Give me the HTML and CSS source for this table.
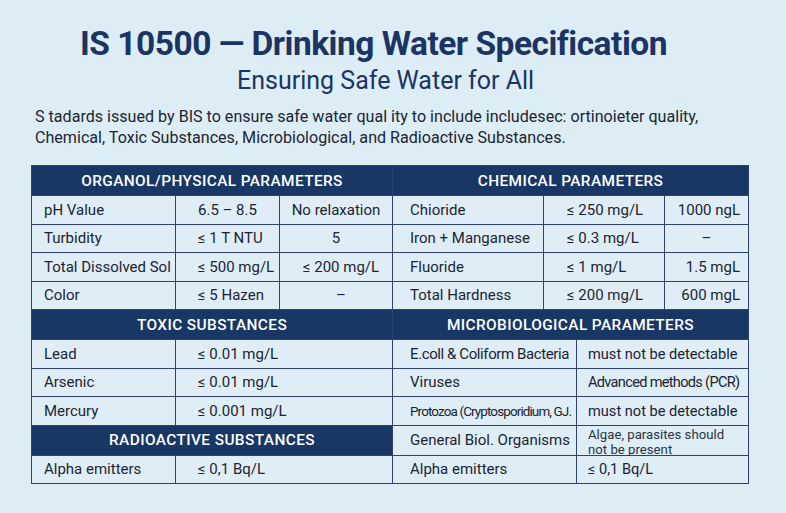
FILE: index.html
```html
<!DOCTYPE html>
<html lang="en">
<head>
<meta charset="utf-8">
<title>IS 10500 — Drinking Water Specification</title>
<link rel="stylesheet" href="styles.css">
</head>
<body>
<main class="page">
  <h1 class="title">IS 10500 — Drinking Water Specification</h1>
  <h2 class="subtitle">Ensuring Safe Water for All</h2>
  <p class="intro">S tadards issued by BIS to ensure safe water qual ity to include includesec: ortinoieter quality,<br>Chemical, Toxic Substances, Microbiological, and Radioactive Substances.</p>

  <div class="tables">
    <div class="panel panel-left">
      <section class="sec sec-phys">
        <div class="hd">ORGANOL/PHYSICAL PARAMETERS</div>
        <div class="c c1">pH Value</div><div class="c c2">6.5 – 8.5</div><div class="c c3">No relaxation</div>
        <div class="c c1">Turbidity</div><div class="c c2">≤ 1 T NTU</div><div class="c c3">5</div>
        <div class="c c1">Total Dissolved Sol</div><div class="c c2">≤ 500 mg/L</div><div class="c c3 c3-wide">≤ 200 mg/L</div>
        <div class="c c1">Color</div><div class="c c2">≤ 5 Hazen</div><div class="c c3 c3-wide">–</div>
      </section>
      <section class="sec sec-tox">
        <div class="hd">TOXIC SUBSTANCES</div>
        <div class="c c1">Lead</div><div class="c c2">≤ 0.01 mg/L</div>
        <div class="c c1">Arsenic</div><div class="c c2">≤ 0.01 mg/L</div>
        <div class="c c1">Mercury</div><div class="c c2">≤ 0.001 mg/L</div>
      </section>
      <section class="sec sec-tox">
        <div class="hd">RADIOACTIVE SUBSTANCES</div>
        <div class="c c1">Alpha emitters</div><div class="c c2">≤ 0,1 Bq/L</div>
      </section>
    </div>

    <div class="panel panel-right">
      <section class="sec sec-chem">
        <div class="hd">CHEMICAL PARAMETERS</div>
        <div class="c r1">Chioride</div><div class="c r2">≤ 250 mg/L</div><div class="c r3">1000 ngL</div>
        <div class="c r1">Iron + Manganese</div><div class="c r2">≤ 0.3 mg/L</div><div class="c r3 r3-dash">–</div>
        <div class="c r1">Fluoride</div><div class="c r2">≤ 1 mg/L</div><div class="c r3">1.5 mgL</div>
        <div class="c r1">Total Hardness</div><div class="c r2">≤ 200 mg/L</div><div class="c r3">600 mgL</div>
      </section>
      <section class="sec sec-micro">
        <div class="hd">MICROBIOLOGICAL PARAMETERS</div>
        <div class="c m1 tight">E.coll &amp; Coliform Bacteria</div><div class="c m2">must not be detectable</div>
        <div class="c m1">Viruses</div><div class="c m2 tighter">Advanced methods (PCR)</div>
        <div class="c m1 narrow">Protozoa (Cryptosporidium, GJ.</div><div class="c m2">must not be detectable</div>
        <div class="c m1 tall">General Biol. Organisms</div><div class="c m2 tall note">Algae, parasites should<br>not be present</div>
        <div class="c m1">Alpha emitters</div><div class="c m2">≤ 0,1 Bq/L</div>
      </section>
    </div>
  </div>
</main>
</body>
</html>
```

FILE: styles.css
```css
html, body {
  margin: 0;
  padding: 0;
}
body {
  background: #dcedf6;
  font-family: Roboto, "Liberation Sans", Arial, sans-serif;
  color: #1c2433;
}
.page {
  padding: 25px 0 0 31px;
  width: 717px;
}
.title {
  margin: 0 0 0 49px;
  font-size: 33.5px;
  line-height: 38px;
  font-weight: 700;
  color: #1b3461;
  letter-spacing: -0.5px;
  white-space: nowrap;
}
.subtitle {
  margin: 3px 0 0 206px;
  font-size: 25px;
  line-height: 30px;
  font-weight: 400;
  color: #1b3461;
  white-space: nowrap;
}
.intro {
  margin: 10px 0 0 4px;
  font-size: 16.1px;
  line-height: 21px;
  color: #1c2433;
  white-space: nowrap;
}
.tables {
  margin-top: 17px;
  display: flex;
  gap: 1px;
  background: #2f4170;
  border: 1px solid #2f4170;
  width: max-content;
}
.panel {
  display: flex;
  flex-direction: column;
  gap: 1px;
}
.panel-left { width: 360px; }
.panel-right { width: 355px; }
.sec {
  display: grid;
  gap: 1px;
}
.sec-phys { grid-template-columns: 143px 103px 1fr; }
.sec-tox { grid-template-columns: 143px 1fr; }
.sec-chem { grid-template-columns: 150px 120px 1fr; }
.sec-micro { grid-template-columns: 183px 1fr; }
.hd {
  grid-column: 1 / -1;
  height: 29px;
  background: #193765;
  color: #ffffff;
  font-size: 15.4px;
  font-weight: 500;
  letter-spacing: 0.4px;
  display: flex;
  align-items: center;
  justify-content: center;
}
.c {
  height: 27.5px;
  background: #dfeef6;
  font-size: 15px;
  display: flex;
  align-items: center;
  white-space: nowrap;
  overflow: visible;
  color: #1c2433;
}
.c1 { padding-left: 12px; }
.c2 { padding-left: 22px; }
.c3 { justify-content: center; }
.c3-wide { padding-left: 10px; }
.r1 { padding-left: 17px; }
.r2 { padding-left: 23px; }
.r3 { justify-content: flex-end; padding-right: 8px; }
.r3-dash { justify-content: center; padding-right: 0; }
.m1 { padding-left: 17px; }
.m2 { padding-left: 11px; font-size: 14.6px; }
.tight { letter-spacing: -0.4px; }
.tighter { letter-spacing: -0.7px; }
.narrow { font-size: 13.5px; letter-spacing: -0.9px; }
.tall { height: 29px; }
.m1.tall { font-size: 15px; }
.note {
  font-size: 13.2px;
  line-height: 15.5px;
  align-items: flex-start;
  padding-top: 1px;
  box-sizing: border-box;
  color: #2a3344;
}
```
